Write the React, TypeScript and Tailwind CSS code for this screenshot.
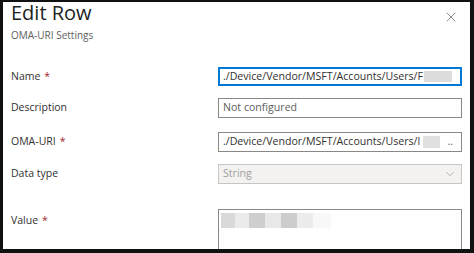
import { ChevronDown, X } from "lucide-react"

const font = { fontFamily: '"Open Sans", "Noto Sans", sans-serif' }

function Label({ text, required }: { text: string; required?: boolean }) {
  return (
    <div className="w-[207px] shrink-0 text-[10.5px] text-[#323130]">
      {text}
      {required && <span className="ml-[4px] text-[#a4262c]">*</span>}
    </div>
  )
}

// blurred bits that hide the user id in the screenshot
function Smudge() {
  return (
    <div className="flex h-[15px]">
      <span className="w-[14px] bg-[#d9d9d9]" />
      <span className="w-[14px] bg-[#ebebeb]" />
      <span className="w-[16px] bg-[#cfcfcf]" />
      <span className="w-[16px] bg-[#e8e8e8]" />
      <span className="w-[16px] bg-[#cdcdcd]" />
      <span className="w-[16px] bg-[#ececec]" />
      <span className="w-[18px] bg-[#f8f8f8]" />
    </div>
  )
}

export default function App() {
  return (
    <div
      style={font}
      className="h-[253px] w-[474px] overflow-hidden border-b-[4px] border-l-[3px] border-r-[4px] border-t-[2px] border-[#111] bg-white"
    >
      <div className="flex items-start justify-between pl-[8px] pr-[11px]">
        <div>
          <h1 className="text-[20px] leading-[22px] text-[#201f1e]">Edit Row</h1>
          <p className="mt-[4px] text-[10px] leading-[14px] text-[#605e5c]">OMA-URI Settings</p>
        </div>
        <X className="mt-[7px] h-[16px] w-[16px] text-[#605e5c]" strokeWidth={1.1} />
      </div>

      <div className="mt-[25px] flex flex-col pl-[8px] pr-[8px]">
        <div className="flex items-center">
          <Label text="Name" required />
          <div className="flex h-[19px] flex-1 items-center overflow-hidden border-2 border-[#0078d4] pl-[3px] text-[10.6px] text-[#323130]">
            <span className="whitespace-nowrap">./Device/Vendor/MSFT/Accounts/Users/F</span>
            <span className="ml-[1px] h-[11px] w-[28px] shrink-0 bg-[#dcdcdc]" />
          </div>
        </div>

        <div className="mt-[12px] flex items-center">
          <Label text="Description" />
          <div className="flex h-[20px] flex-1 items-center border border-[#8a8886] pl-[4px] text-[10.6px] text-[#605e5c]">
            Not configured
          </div>
        </div>

        <div className="mt-[14px] flex items-center">
          <Label text="OMA-URI" required />
          <div className="flex h-[20px] flex-1 items-center overflow-hidden border border-[#8a8886] pl-[4px] text-[10.6px] text-[#323130]">
            <span className="whitespace-nowrap">./Device/Vendor/MSFT/Accounts/Users/l</span>
            <span className="ml-[3px] h-[12px] w-[17px] shrink-0 bg-[#e0e0e0]" />
            <span className="ml-auto pr-[8px] text-[#605e5c]">..</span>
          </div>
        </div>

        <div className="mt-[12px] flex items-center">
          <Label text="Data type" />
          <div className="flex h-[20px] flex-1 items-center border border-[#c8c6c4] bg-[#f3f2f1] pl-[4px] pr-[4px] text-[10.6px] text-[#a19f9d]">
            String
            <ChevronDown className="ml-auto h-[14px] w-[14px] text-[#a19f9d]" strokeWidth={1.2} />
          </div>
        </div>

        <div className="mt-[25px] flex items-start">
          <div className="pt-[4px]">
            <Label text="Value" required />
          </div>
          <div className="h-[60px] flex-1 border border-[#8a8886] px-[2px] pt-[3px]">
            <Smudge />
          </div>
        </div>
      </div>
    </div>
  )
}
